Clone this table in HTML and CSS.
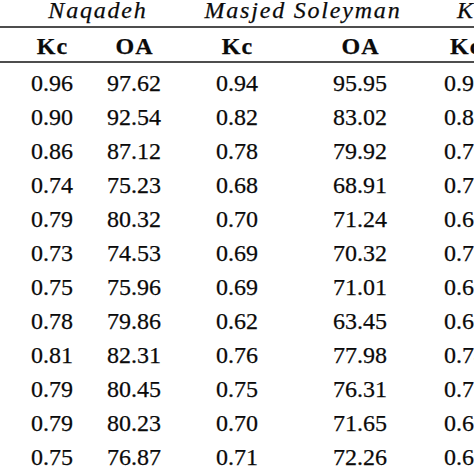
FILE: index.html
```html
<!DOCTYPE html>
<html>
<head>
<meta charset="utf-8">
<link rel="stylesheet" href="styles.css">
</head>
<body>
<div class="table">
  <div class="row titles">
    <div class="group g1">Naqadeh</div>
    <div class="group g2">Masjed Soleyman</div>
    <div class="group g3">Kermanshah</div>
  </div>
  <div class="row head">
    <div class="c1">Kc</div><div class="c2">OA</div><div class="c3">Kc</div><div class="c4">OA</div><div class="c5">Kc</div>
  </div>
  <div class="body">
    <div class="row data"><div class="c1">0.96</div><div class="c2">97.62</div><div class="c3">0.94</div><div class="c4">95.95</div><div class="c5">0.93</div></div>
    <div class="row data"><div class="c1">0.90</div><div class="c2">92.54</div><div class="c3">0.82</div><div class="c4">83.02</div><div class="c5">0.85</div></div>
    <div class="row data"><div class="c1">0.86</div><div class="c2">87.12</div><div class="c3">0.78</div><div class="c4">79.92</div><div class="c5">0.79</div></div>
    <div class="row data"><div class="c1">0.74</div><div class="c2">75.23</div><div class="c3">0.68</div><div class="c4">68.91</div><div class="c5">0.71</div></div>
    <div class="row data"><div class="c1">0.79</div><div class="c2">80.32</div><div class="c3">0.70</div><div class="c4">71.24</div><div class="c5">0.68</div></div>
    <div class="row data"><div class="c1">0.73</div><div class="c2">74.53</div><div class="c3">0.69</div><div class="c4">70.32</div><div class="c5">0.72</div></div>
    <div class="row data"><div class="c1">0.75</div><div class="c2">75.96</div><div class="c3">0.69</div><div class="c4">71.01</div><div class="c5">0.66</div></div>
    <div class="row data"><div class="c1">0.78</div><div class="c2">79.86</div><div class="c3">0.62</div><div class="c4">63.45</div><div class="c5">0.64</div></div>
    <div class="row data"><div class="c1">0.81</div><div class="c2">82.31</div><div class="c3">0.76</div><div class="c4">77.98</div><div class="c5">0.74</div></div>
    <div class="row data"><div class="c1">0.79</div><div class="c2">80.45</div><div class="c3">0.75</div><div class="c4">76.31</div><div class="c5">0.73</div></div>
    <div class="row data"><div class="c1">0.79</div><div class="c2">80.23</div><div class="c3">0.70</div><div class="c4">71.65</div><div class="c5">0.69</div></div>
    <div class="row data"><div class="c1">0.75</div><div class="c2">76.87</div><div class="c3">0.71</div><div class="c4">72.26</div><div class="c5">0.67</div></div>
  </div>
</div>
</body>
</html>
```

FILE: styles.css
```css
html, body {
  margin: 0;
  padding: 0;
  background: #ffffff;
  overflow: hidden;
  width: 474px;
  height: 474px;
}
.table {
  width: 474px;
  font-family: "Liberation Serif", "Times New Roman", serif;
  font-size: 24px;
  color: #0a0a0a;
  -webkit-text-stroke: 0.25px #0a0a0a;
}
.row {
  display: grid;
  grid-template-columns: 84px 80px 126px 120px 90px;
  padding-left: 10px;
  white-space: nowrap;
}
.row > div {
  text-align: center;
}
.titles {
  grid-template-columns: 164px 246px 90px;
  font-style: italic;
  letter-spacing: 1.8px;
  line-height: 20px;
  padding-bottom: 6px;
  border-bottom: 2px solid #4d4d4d;
}
.titles .g1 { padding-left: 12px; }
.titles .g2 { padding-left: 12px; }
.titles .g3 { text-align: left; padding-left: 37px; }
.head {
  font-weight: bold;
  letter-spacing: 1px;
  line-height: 30px;
  padding-top: 3px;
  border-bottom: 2px solid #4d4d4d;
}
.head > div { padding-left: 1px; }
.body {
  padding-top: 3px;
}
.data {
  line-height: 34px;
}
.row > .c5 { text-align: left; padding-left: 24px; }
.head > .c5 { padding-left: 30px; }
```
